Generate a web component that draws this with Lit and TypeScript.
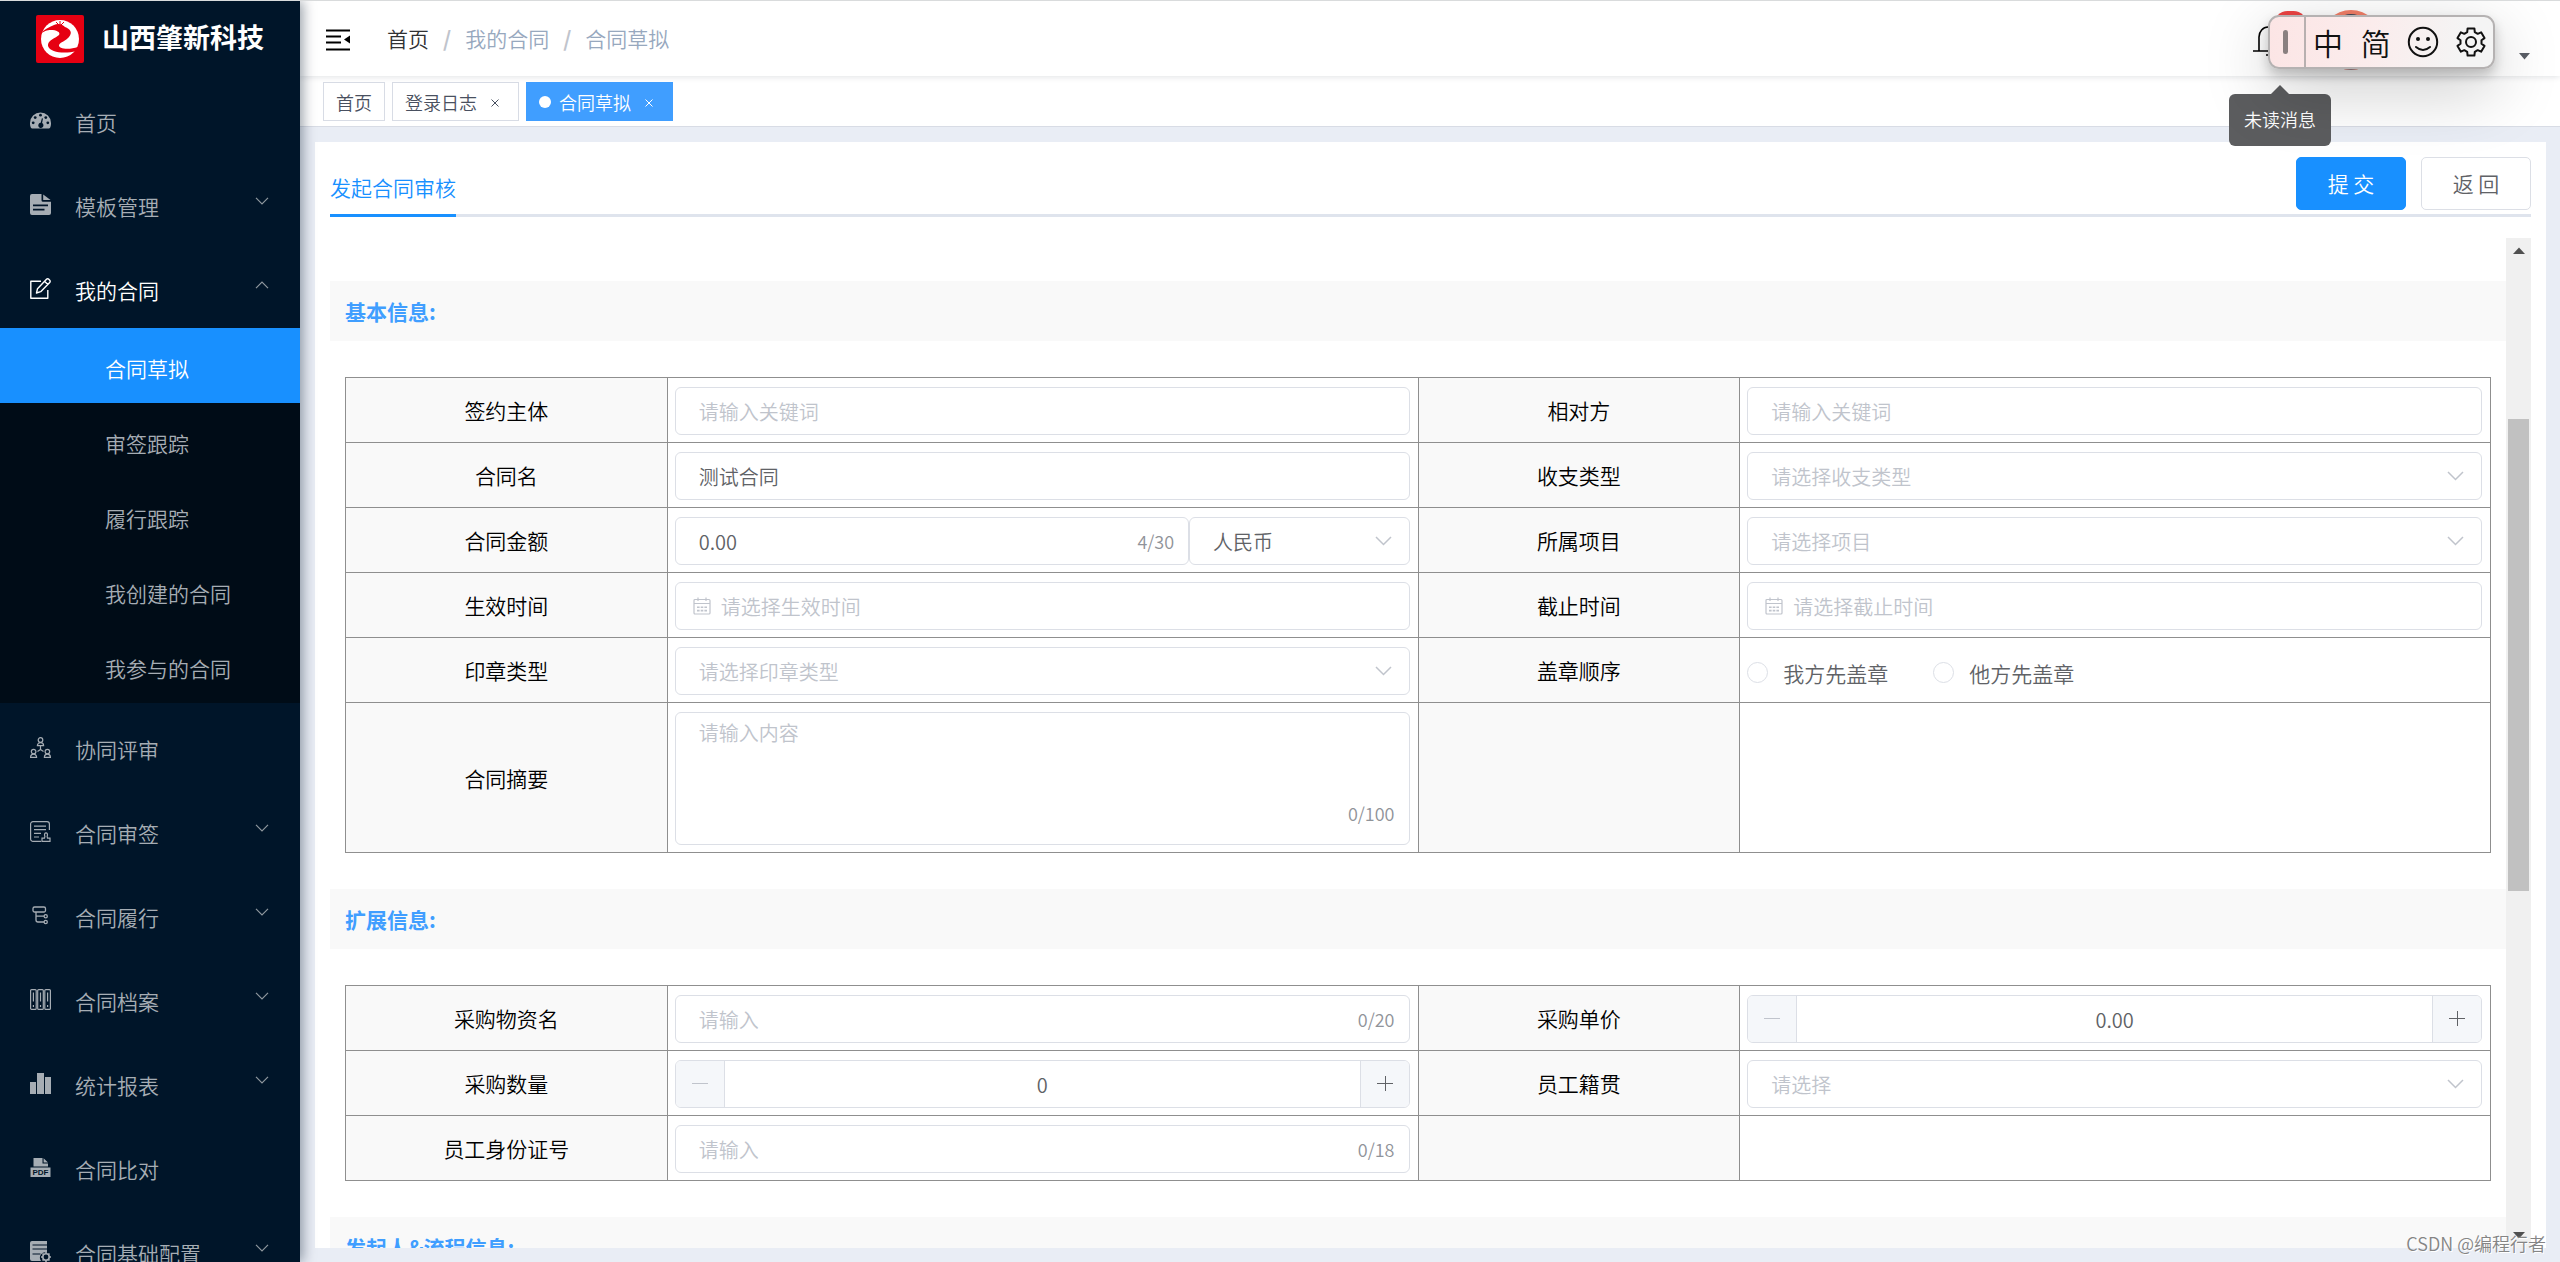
import { LitElement, html, css, svg, nothing } from "lit";
import type { TemplateResult } from "lit";
import { customElement, state } from "lit/decorators.js";
import { classMap } from "lit/directives/class-map.js";

interface MenuItem {
  label: string;
  icon: TemplateResult;
  expandable?: boolean;
  open?: boolean;
  children?: string[];
}

interface Field {
  id: string;
  label: string;
  control: TemplateResult;
  group?: boolean;
}

type Row = [Field, Field | null];

const icon = (body: unknown) =>
  html`<svg class="menu-icon" viewBox="0 0 21 21" aria-hidden="true">${body}</svg>`;

const icons = {
  dashboard: icon(svg`
    <path fill="currentColor" d="M2.2 18.6A1.6 1.6 0 0 1 .9 17.8 10.4 10.4 0 0 1 0 13 10.5 10.5 0 0 1 21 13a10.4 10.4 0 0 1-.9 4.8 1.6 1.6 0 0 1-1.3.8z"/>
    <g fill="#001529"><circle cx="10.5" cy="5.2" r="1.4"/><circle cx="5.2" cy="7.6" r="1.4"/><circle cx="15.8" cy="7.6" r="1.4"/><circle cx="3.2" cy="12.8" r="1.4"/><circle cx="17.8" cy="12.8" r="1.4"/><path d="M11.9 8.2 13 8.5l-.9 4.6a2.6 2.6 0 1 1-1.4-.3z"/></g>`),
  doc: icon(svg`
    <path fill="currentColor" d="M2 0h9.5v6.2a1.5 1.5 0 0 0 1.5 1.5h8V19a2 2 0 0 1-2 2H2a2 2 0 0 1-2-2V2a2 2 0 0 1 2-2z"/>
    <path fill="currentColor" d="M13.2.4 20.6 6h-7.4z"/>
    <path stroke="#001529" stroke-width="1.8" d="M3 11.4h15M3 15.6h11.5"/>`),
  edit: icon(svg`
    <g fill="none" stroke="currentColor" stroke-width="1.4" stroke-linejoin="round">
      <path d="M11 3.3H.8v17h17V12"/>
      <path d="m6.5 15 1-4.3 9-9.4a1.6 1.6 0 0 1 2.3 0l.9.9a1.6 1.6 0 0 1 0 2.3l-9 9.2zM14.8 3.4l3 3"/>
    </g>`),
  people: icon(svg`
    <g fill="none" stroke="currentColor" stroke-width="1.2">
      <circle cx="10.5" cy="3" r="2.3"/><path d="M7.4 8.6c0-4 6.200-4 6.200 0zM10.500 9v3.500l-3 2M10.500 12.500l3 2"/>
      <circle cx="3.600" cy="14.600" r="2.300"/><path d="M.6 20.300c0-4.200 6-4.200 6 0z"/>
      <circle cx="17.400" cy="14.600" r="2.300"/><path d="M14.400 20.300c0-4.200 6-4.200 6 0z"/>
    </g>`),
  review: icon(svg`
    <g fill="none" stroke="currentColor" stroke-width="1.200">
      <path d="M11 20.300H3a2.400 2.400 0 0 1-2.400-2.400V3A2.400 2.400 0 0 1 3 .6h14A2.400 2.400 0 0 1 19.400 3v6M4 5.200h12M4 8.600h12M4 12.400h7M4 16h5"/>
      <path d="M14.900 15.400c-2-4.600 4.200-4.600 2.200 0l.4 1.800h2.500v3.200h-8v-3.200h2.500z"/>
    </g>`),
  flow: icon(svg`
    <g fill="none" stroke="currentColor" stroke-width="1.300">
      <rect x="3" y="2" width="12.500" height="5" rx="1.600"/>
      <path d="M6 7v8a2 2 0 0 0 2 2h6M6 11.200h8"/><circle cx="15.700" cy="11.200" r="1.600"/><circle cx="15.700" cy="17" r="1.600"/>
    </g>`),
  archive: icon(svg`
    <g fill="none" stroke="currentColor" stroke-width="1.200">
      <rect x=".6" y=".6" width="5.600" height="19.800" rx="1"/><rect x="7.700" y=".6" width="5.600" height="19.800" rx="1"/><rect x="14.800" y=".6" width="5.600" height="19.800" rx="1"/>
      <path d="M3.400 3.500v9M10.500 3.500v9M17.600 3.500v9M3.400 16v2M10.500 16v2M17.600 16v2"/>
    </g>`),
  bars: icon(svg`<path fill="currentColor" d="M0 9h6v12H0zM7 0h7v21H7zM15 4h6v17h-6z"/>`),
  pdf: icon(svg`
    <path fill="currentColor" d="M3.500 1h9v5.500H18v3H3.500zM13.600 1.200 18 5.500h-4.400zM.5 10.500h20V20H.5z"/>
    <text x="10.500" y="18.200" text-anchor="middle" font-size="8" font-weight="700" font-family="Liberation Sans, sans-serif" fill="#001529">PDF</text>`),
  config: icon(svg`
    <path fill="currentColor" d="M2 0h15v11.500a5.500 5.500 0 0 0-6 8.500H2a2 2 0 0 1-2-2V2a2 2 0 0 1 2-2z"/>
    <path stroke="#001529" stroke-width="1.200" d="M2.500 4H17M2.500 8H17M2.500 13h8"/>
    <circle cx="16" cy="16" r="3.200" fill="none" stroke="currentColor" stroke-width="1.600"/>
    <path stroke="currentColor" stroke-width="1.600" d="M16 11v2M16 19v2M11 16h2M19 16h2M12.500 12.500l1.400 1.400M18.100 18.100l1.400 1.400M12.500 19.500l1.400-1.400M18.100 13.900l1.400-1.400"/>`),
};

const MENU: MenuItem[] = [
  { label: "首页", icon: icons.dashboard },
  { label: "模板管理", icon: icons.doc, expandable: true },
  {
    label: "我的合同", icon: icons.edit, expandable: true, open: true,
    children: ["合同草拟", "审签跟踪", "履行跟踪", "我创建的合同", "我参与的合同"],
  },
  { label: "协同评审", icon: icons.people },
  { label: "合同审签", icon: icons.review, expandable: true },
  { label: "合同履行", icon: icons.flow, expandable: true },
  { label: "合同档案", icon: icons.archive, expandable: true },
  { label: "统计报表", icon: icons.bars, expandable: true },
  { label: "合同比对", icon: icons.pdf },
  { label: "合同基础配置", icon: icons.config, expandable: true },
];

/** Outline of a six-tooth gear centred on the origin. */
const gearPath = (() => {
  const points: string[] = [];
  const at = (deg: number, r: number) => {
    const a = (deg * Math.PI) / 180;
    points.push(`${(Math.cos(a) * r).toFixed(1)} ${(Math.sin(a) * r).toFixed(1)}`);
  };
  for (let i = 0; i < 6; i++) {
    const a = i * 60 - 90;
    at(a - 21, 10.6);
    at(a - 14, 14);
    at(a + 14, 14);
    at(a + 21, 10.6);
  }
  return `M${points.join("L")}Z`;
})();

const chevron = (cls: string) => html`
  <svg class=${cls} viewBox="0 0 17 10" aria-hidden="true">
    <path d="M1 1l7.500 7.500L16 1" fill="none" stroke="currentColor" stroke-width="1.500" />
  </svg>`;

const text = (id: string, placeholder: string, value = "", counter = "") => html`
  <div class="box">
    <input id=${id} class="entry" type="text" placeholder=${placeholder} .value=${value} />
    ${counter ? html`<span class="counter">${counter}</span>` : nothing}
  </div>`;

const select = (id: string, option: string, filled = false) => html`
  <div class="box picker">
    <select id=${id} class=${classMap({ entry: true, choice: true, empty: !filled })}
      aria-label=${filled ? "币种" : nothing}>
      <option>${option}</option>
    </select>
    ${chevron("arrow")}
  </div>`;

const date = (id: string, placeholder: string) => html`
  <div class="box dated">
    <svg class="calendar" viewBox="0 0 18 18" aria-hidden="true">
      <g fill="none" stroke="currentColor" stroke-width="1.200">
        <rect x="1" y="2.500" width="16" height="14.500" rx="1" />
        <path d="M1 6.500h16M5 .5v3.500M13 .5v3.500" />
        <path d="M4 10.200h2.600M7.700 10.200h2.600M11.400 10.200H14M4 13.600h2.600M7.700 13.600h2.600M11.400 13.600H14" stroke-width="1.600" />
      </g>
    </svg>
    <input id=${id} class="entry" type="text" placeholder=${placeholder} />
  </div>`;

const stepper = (id: string, value: string) => html`
  <div class="box stepper">
    <button class="step minus" type="button" aria-label="减少">
      <svg class="sign" viewBox="0 0 16 16"><path d="M0 7.500h16" stroke="currentColor" /></svg>
    </button>
    <input id=${id} class="entry number" type="text" inputmode="decimal" .value=${value} />
    <button class="step plus" type="button" aria-label="增加">
      <svg class="sign" viewBox="0 0 16 16"><path d="M0 7.500h16M8.500 0v15" stroke="currentColor" /></svg>
    </button>
  </div>`;

const BASIC: Row[] = [
  [
    { id: "party-a", label: "签约主体", control: text("party-a", "请输入关键词") },
    { id: "party-b", label: "相对方", control: text("party-b", "请输入关键词") },
  ],
  [
    { id: "name", label: "合同名", control: text("name", "", "测试合同") },
    { id: "direction", label: "收支类型", control: select("direction", "请选择收支类型") },
  ],
  [
    {
      id: "amount", label: "合同金额",
      control: html`<div class="pair">${text("amount", "", "0.00", "4/30")}${select("currency", "人民币", true)}</div>`,
    },
    { id: "project", label: "所属项目", control: select("project", "请选择项目") },
  ],
  [
    { id: "start", label: "生效时间", control: date("start", "请选择生效时间") },
    { id: "end", label: "截止时间", control: date("end", "请选择截止时间") },
  ],
  [
    { id: "seal", label: "印章类型", control: select("seal", "请选择印章类型") },
    {
      id: "order", label: "盖章顺序", group: true,
      control: html`
        <div class="radios" role="radiogroup" aria-labelledby="order">
          <label class="radio"><input class="dot" type="radio" name="order" />我方先盖章</label>
          <label class="radio"><input class="dot" type="radio" name="order" />他方先盖章</label>
        </div>`,
    },
  ],
  [
    {
      id: "summary", label: "合同摘要",
      control: html`
        <div class="box multi">
          <textarea id="summary" class="entry area" placeholder="请输入内容"></textarea>
          <span class="counter">0/100</span>
        </div>`,
    },
    null,
  ],
];

const EXTRA: Row[] = [
  [
    { id: "goods", label: "采购物资名", control: text("goods", "请输入", "", "0/20") },
    { id: "price", label: "采购单价", control: stepper("price", "0.00") },
  ],
  [
    { id: "count", label: "采购数量", control: stepper("count", "0") },
    { id: "origin", label: "员工籍贯", control: select("origin", "请选择") },
  ],
  [{ id: "id-no", label: "员工身份证号", control: text("id-no", "请输入", "", "0/18") }, null],
];

@customElement("app-root")
export class AppRoot extends LitElement {
  @state() private current = "合同草拟";

  static styles = css`
    :host {
      display: block;
      height: 100vh;
      overflow: hidden;
      position: relative;
      box-sizing: border-box;
      border-top: 1px solid #d9dbdc;
      background: #e9edf5;
      color: #303133;
      font-family: "Noto Sans CJK SC", sans-serif;
      font-size: 21px;
      font-weight: 350;
      line-height: 30px;
    }
    *, *::before { box-sizing: border-box; }
    button, input, select, textarea { font: inherit; color: inherit; margin: 0; padding: 0; border: 0; background: none; border-radius: 0; outline: none; }
    button { cursor: pointer; }
    a { color: inherit; text-decoration: none; }
    svg { display: block; flex: none; }

    .layout { display: flex; height: 100%; }

    .sidebar { flex: none; width: 300px; overflow: hidden; background: #001529; color: #a6adb4; }
    .shade { position: relative; z-index: 1; display: flex; flex: none; box-shadow: 3px 0 12px rgba(0, 21, 41, .4); }
    .brand { display: flex; align-items: center; gap: 18px; height: 75px; padding: 1px 36px 0; color: #fff; font-size: 27px; font-weight: 700; white-space: nowrap; }
    .logo { width: 48px; height: 48px; }
    .brand-name { margin-bottom: 4px; }
    .menu, .submenu { list-style: none; margin: 0; padding: 0; }
    .menu-link { display: flex; align-items: center; gap: 24px; width: 100%; height: 84px; padding: 4px 31px 0 30px; text-align: left; }
    .menu-link.open { color: #fff; }
    .menu-icon { width: 21px; height: 21px; }
    .menu-text { flex: 1; padding-top: 4px; white-space: nowrap; }
    .caret { width: 14px; height: 8px; margin-bottom: 6px; color: #8f989f; }
    .open .caret { transform: rotate(180deg); }
    .submenu { background: #000c17; }
    .sub-link { display: flex; align-items: center; height: 75px; padding: 4px 0 0 105px; }
    .sub-link.active { background: #1890ff; color: #fff; }

    .main { flex: 1; min-width: 0; display: flex; flex-direction: column; }
    .topbar { flex: none; display: flex; align-items: center; height: 75px; padding: 2px 30px 0 26px; background: #fff; box-shadow: 0 1px 6px rgba(0, 21, 41, .12); position: relative; }
    .fold { width: 24px; height: 22px; color: #000; }
    .fold svg { width: 24px; height: 22px; }
    .crumbs { flex: 1; display: flex; gap: 14px; margin-left: 37px; padding-bottom: 3px; color: #97a8be; }
    .crumbs a { color: #303133; }
    .slash { color: #c0c4cc; font-weight: 700; }
    .bell { position: relative; width: 30px; height: 36px; margin-right: 38px; color: #000; }
    .bell svg { width: 30px; height: 36px; }
    .badge { position: absolute; left: 21px; top: -11px; width: 33px; height: 27px; border-radius: 14px; background: #ef4444; }
    .avatar { width: 60px; height: 60px; margin-right: 138px; }
    .drop { width: 11px; height: 7px; margin-top: 34px; }

    .tabs { flex: none; display: flex; gap: 7px; height: 51px; padding: 6px 23px; background: #fff; border-bottom: 1px solid #d8dce5; font-size: 18px; line-height: 24px; color: #495060; }
    .tab { display: flex; align-items: center; height: 39px; padding: 0 12px; border: 1px solid #d8dce5; }
    .tab.closable { padding-right: 16px; }
    .tab.active { background: #409eff; border-color: #409eff; color: #fff; }
    .tab.active::before { content: ""; width: 12px; height: 12px; margin-right: 8px; border-radius: 50%; background: #fff; }
    .close { width: 14px; height: 14px; margin: 3px 0 0 11px; display: grid; place-items: center; }
    .close svg { width: 8px; height: 8px; }

    .page { flex: 1; min-height: 0; display: flex; padding: 15px 14px 14px 15px; }
    .card { flex: 1; min-width: 0; display: flex; flex-direction: column; padding: 0 15px; background: #fff; }
    .card-head { flex: none; display: flex; align-items: flex-start; gap: 15px; height: 75px; border-bottom: 3px solid #dfe4ed; }
    .card-title { height: 75px; margin-right: auto; padding-top: 30px; border-bottom: 3px solid #1890ff; color: #1890ff; }
    .btn { width: 110px; height: 53px; margin-top: 15px; padding-bottom: 1px; border: 1px solid #dcdfe6; border-radius: 5px; color: #606266; }
    .btn.primary { background: #1890ff; border-color: #1890ff; color: #fff; }

    .scroll { flex: 1; min-height: 0; display: flex; margin-top: 21px; overflow: hidden; }
    .content { flex: 1; min-width: 0; overflow: hidden; padding-top: 43px; }
    .track { flex: none; width: 25px; display: flex; flex-direction: column; padding: 0 2px; background: #f0f0f0; }
    .track svg { width: 12px; height: 7px; margin: 9px auto; color: #505050; }
    .before { flex: 156; }
    .thumb { flex: 472; background: #c1c1c1; }
    .after { flex: 332; }

    .section { height: 60px; margin: 0; padding: 15px 15px 0; background: #f9f9f9; color: #409eff; font-size: 21px; font-weight: 700; }
    .grid-wrap { padding: 36px 15px; }
    .grid { width: 100%; border-collapse: collapse; table-layout: fixed; color: #000; }
    .grid th, .grid td { height: 65px; border: 1px solid #8f8f8f; }
    .grid th { width: 15%; padding: 0; background: #f9f9f9; font-weight: inherit; }
    .grid td { width: 35%; padding: 9px 8px 7px 7px; }

    .box { flex: 1; display: flex; align-items: center; height: 48px; padding: 0 14px 0 23px; border: 1px solid #dcdfe6; border-radius: 6px; background: #fff; color: #606266; font-size: 20px; line-height: 28px; }
    .entry { flex: 1; min-width: 0; width: 100%; height: 100%; }
    .entry::placeholder { color: #c0c4cc; opacity: 1; }
    .counter { color: #909399; font-size: 18px; line-height: 24px; }
    .pair { display: flex; }
    .pair .picker { flex: none; width: 30%; }
    .picker { display: grid; padding: 0; }
    .choice { grid-area: 1 / 1; appearance: none; padding: 2px 44px 0 23px; }
    .choice.empty { color: #c0c4cc; }
    .arrow { grid-area: 1 / 1; justify-self: end; width: 17px; height: 10px; margin-right: 17px; color: #c0c4cc; pointer-events: none; }
    .dated { padding-left: 17px; }
    .calendar { width: 18px; height: 18px; margin-right: 10px; color: #c0c4cc; }
    .stepper { padding: 0; overflow: hidden; }
    .step { width: 49px; height: 100%; display: grid; place-items: center; background: #f5f7fa; color: #606266; border: 0 solid #dcdfe6; }
    .minus { border-right-width: 1px; color: #c0c4cc; }
    .plus { border-left-width: 1px; }
    .sign { width: 16px; height: 16px; }
    .number { text-align: center; }
    .multi { flex-direction: column; align-items: stretch; height: 133px; padding: 6px 14px 19px 23px; }
    .area { display: block; resize: none; }
    .multi .counter { align-self: flex-end; }
    .radios { display: flex; gap: 45px; height: 48px; padding-top: 3px; color: #606266; }
    .radio { display: flex; align-items: center; gap: 15px; }
    .dot { appearance: none; width: 21px; height: 21px; border: 1px solid #dcdfe6; border-radius: 50%; background: #fff; }

    .ime { position: absolute; z-index: 3; top: 14px; right: 65px; display: flex; align-items: center; width: 227px; height: 54px; overflow: visible; border: 2px solid #b5b2b2; border-radius: 11px; background: linear-gradient(100deg, #fce5e5, #fbecec 45%, #f4f4f4 85%); color: #111; font-size: 30px; line-height: 40px; box-shadow: 0 6px 12px rgba(0, 0, 0, .2), 0 20px 66px rgba(0, 0, 0, .22); }
    .grip { display: grid; place-items: center; flex: none; width: 36px; height: 100%; padding-right: 3px; border-right: 2px solid #b8b0b0; }
    .grip::before { content: ""; width: 5px; height: 24px; border-radius: 3px; background: #8a8080; }
    .keys { flex: 1; display: flex; align-items: center; justify-content: space-between; padding: 0 6px; }
    .key { width: 32px; display: grid; place-items: center; }
    .key svg { width: 32px; height: 32px; }

    .tip { position: absolute; z-index: 2; top: 93px; right: 229px; width: 102px; height: 52px; padding-bottom: 2px; display: grid; place-items: center; border-radius: 6px; background: #5c5d5f; color: #fff; font-size: 18px; line-height: 24px; }
    .tip::before { content: ""; position: absolute; top: -9px; left: 42px; border: 9px solid transparent; border-top: 0; border-bottom-color: #5c5d5f; }
    .watermark { position: absolute; z-index: 2; right: 14px; bottom: 6px; color: #858585; font-size: 18px; line-height: 26px; text-shadow: 1px 1px 0 #fff; }
  `;

  private renderMenu() {
    return MENU.map(
      (item) => html`
        <li>
          <button class=${classMap({ "menu-link": true, open: !!item.open })} type="button">
            ${item.icon}
            <span class="menu-text">${item.label}</span>
            ${item.expandable ? chevron("caret") : nothing}
          </button>
          ${item.children
            ? html`<ul class="submenu">
                ${item.children.map(
                  (child) => html`<li>
                    <a href="#" class=${classMap({ "sub-link": true, active: child === this.current })}
                      @click=${(e: Event) => { e.preventDefault(); this.current = child; }}>${child}</a>
                  </li>`,
                )}
              </ul>`
            : nothing}
        </li>`,
    );
  }

  private renderCell(field: Field | null) {
    if (!field) return html`<th></th><td></td>`;
    return html`
      <th scope="row">
        ${field.group ? html`<span id=${field.id}>${field.label}</span>` : html`<label for=${field.id}>${field.label}</label>`}
      </th>
      <td>${field.control}</td>`;
  }

  private renderGrid(rows: Row[]) {
    return html`<div class="grid-wrap">
      <table class="grid">
        <tbody>${rows.map(([a, b]) => html`<tr>${this.renderCell(a)}${this.renderCell(b)}</tr>`)}</tbody>
      </table>
    </div>`;
  }

  private closeIcon() {
    return html`<svg viewBox="0 0 8 8"><path d="M.5.5l7 7M7.500.5l-7 7" stroke="currentColor" fill="none" /></svg>`;
  }

  render() {
    return html`
      <div class="layout">
        <div class="shade">
          <aside class="sidebar">
            <div class="brand">
              <svg class="logo" viewBox="0 0 48 48" aria-hidden="true">
                <rect width="48" height="48" rx="2" fill="#e60012" />
                <circle cx="24" cy="24" r="19" fill="#fff" />
                <path fill="#e60012" d="M3 20C8 14 14 12 18 10C22 8 26 9 29 12C34 14 37 17 33 22C30 26 24 27 23 30C22 34 33 35 42 32L40 36C30 39 14 38 12 31C11 25 20 23 23 20C25 17 20 15 15 15C11 15 8 16 3 20Z" />
                <path stroke="#e60012" d="M20 7l3 3M24 6v4M28 7l-3 3" />
              </svg>
              <span class="brand-name">山西肇新科技</span>
            </div>
            <nav><ul class="menu">${this.renderMenu()}</ul></nav>
          </aside>
        </div>

        <div class="main">
          <header class="topbar">
            <button class="fold" type="button" aria-label="收起菜单">
              <svg viewBox="0 0 24 22">
                <path d="M0 1.500h24M0 7.500h15M0 13.500h15M0 20.500h24" stroke="currentColor" stroke-width="2" />
                <path d="M24 6.500v8l-6-4z" fill="currentColor" />
              </svg>
            </button>
            <nav class="crumbs">
              <a href="#">首页</a><span class="slash">/</span><span>我的合同</span><span class="slash">/</span><span>合同草拟</span>
            </nav>
            <button class="bell" type="button" aria-label="未读消息">
              <svg viewBox="0 0 30 36">
                <path d="M0 29h30M6 29V15a9 10 0 0 1 18 0v14M13 33h4" fill="none" stroke="currentColor" stroke-width="1.600" />
              </svg>
              <span class="badge"></span>
            </button>
            <svg class="avatar" viewBox="0 0 60 60" aria-hidden="true">
              <circle cx="30" cy="30" r="30" fill="#f47f68" />
              <circle cx="30" cy="22" r="18" fill="#3f4a5a" />
              <path d="M8 50a30 30 0 0 0 44 0q-22-12-44 0z" fill="#4f9dc4" />
            </svg>
            <svg class="drop" viewBox="0 0 11 7" aria-hidden="true"><path d="M0 0h11L5.500 6.500z" fill="#5a5e66" /></svg>
          </header>

          <nav class="tabs">
            <a class="tab" href="#">首页</a>
            <a class="tab closable" href="#">登录日志<span class="close">${this.closeIcon()}</span></a>
            <a class="tab closable active" href="#">合同草拟<span class="close">${this.closeIcon()}</span></a>
          </nav>

          <main class="page">
            <div class="card">
              <div class="card-head">
                <a class="card-title" href="#">发起合同审核</a>
                <button class="btn primary" type="button">提 交</button>
                <button class="btn" type="button">返 回</button>
              </div>
              <div class="scroll">
                <form class="content">
                  <h2 class="section">基本信息:</h2>
                  ${this.renderGrid(BASIC)}
                  <h2 class="section">扩展信息:</h2>
                  ${this.renderGrid(EXTRA)}
                  <h2 class="section">发起人&amp;流程信息:</h2>
                </form>
                <div class="track" aria-hidden="true">
                  <svg viewBox="0 0 12 7"><path d="M0 7l6-6.500L12 7z" fill="currentColor" /></svg>
                  <div class="before"></div>
                  <div class="thumb"></div>
                  <div class="after"></div>
                  <svg viewBox="0 0 12 7"><path d="M0 0l6 6.500L12 0z" fill="currentColor" /></svg>
                </div>
              </div>
            </div>
          </main>
        </div>
      </div>

      <div class="ime">
        <span class="grip"></span>
        <div class="keys">
          <span class="key">中</span>
          <span class="key">简</span>
          <span class="key">
            <svg viewBox="-16 -16 32 32" aria-hidden="true">
              <circle r="14.200" fill="none" stroke="currentColor" stroke-width="2" />
              <circle cx="-5" cy="-3" r="2" fill="currentColor" /><circle cx="5" cy="-3" r="2" fill="currentColor" />
              <path d="M-7 5q7 6 14 0" fill="none" stroke="currentColor" stroke-width="2" stroke-linecap="round" />
            </svg>
          </span>
          <span class="key">
            <svg viewBox="-16 -16 32 32" aria-hidden="true">
              <path d=${gearPath} fill="none" stroke="currentColor" stroke-width="2" stroke-linejoin="round" />
              <circle r="5" fill="none" stroke="currentColor" stroke-width="2" />
            </svg>
          </span>
        </div>
      </div>
      <div class="tip" role="tooltip">未读消息</div>
      <div class="watermark">CSDN @编程行者</div>
    `;
  }
}
